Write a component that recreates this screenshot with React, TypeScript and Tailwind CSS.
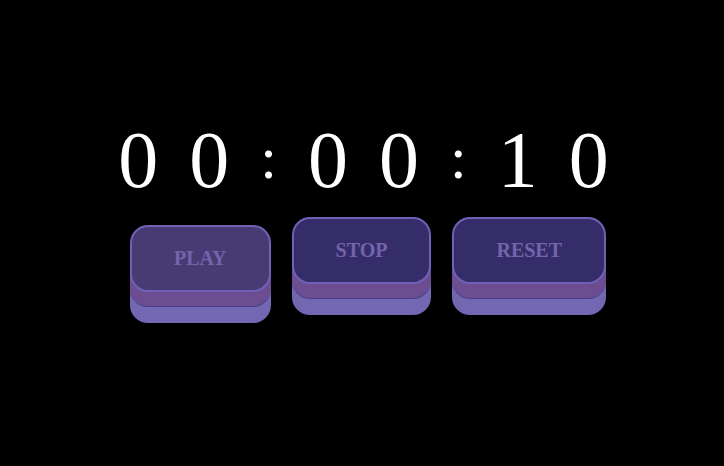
import { useState } from "react";

const serif = "font-['Liberation_Serif','Times_New_Roman',serif]";

type Btn = { label: string; face: string };

const buttons: Btn[] = [
  { label: "PLAY", face: "bg-[#483b74]" },
  { label: "STOP", face: "bg-[#352c6a]" },
  { label: "RESET", face: "bg-[#352c6a]" },
];

const pad = (n: number) => String(n).padStart(2, "0").split("");

const App = () => {
  const [seconds] = useState(10);
  const [active] = useState("PLAY");

  const h = pad(Math.floor(seconds / 3600));
  const m = pad(Math.floor((seconds % 3600) / 60));
  const s = pad(seconds % 60);
  const groups = [h, m, s];

  return (
    <div className={`min-h-screen bg-black pt-[116px] ${serif}`}>
      <div className="flex h-[88px] items-center justify-center gap-[31px] pl-[3px] text-white">
        {groups.map((digits, gi) => (
          <div key={gi} className="contents">
            {gi > 0 && <span className="-translate-y-0.5 text-6xl leading-none">:</span>}
            {digits.map((d, di) => (
              <span key={di} className="text-[80px] leading-[88px]">
                {d}
              </span>
            ))}
          </div>
        ))}
      </div>

      <div className="mt-[13px] flex items-start justify-center gap-[21px] pl-3">
        {buttons.map((b) => (
          <button
            key={b.label}
            className={`rounded-[18px] border-2 border-[#6f62b6] px-[42px] py-5 text-[20px] leading-[23px] font-bold text-[#7564ac] shadow-[0_14px_0_#6c4d91,0_15px_0_#4a3f8c,0_31px_0_#7467b1] ${b.face} ${
              active === b.label ? "translate-y-2" : ""
            }`}
          >
            {b.label}
          </button>
        ))}
      </div>
    </div>
  );
};

export default App;
